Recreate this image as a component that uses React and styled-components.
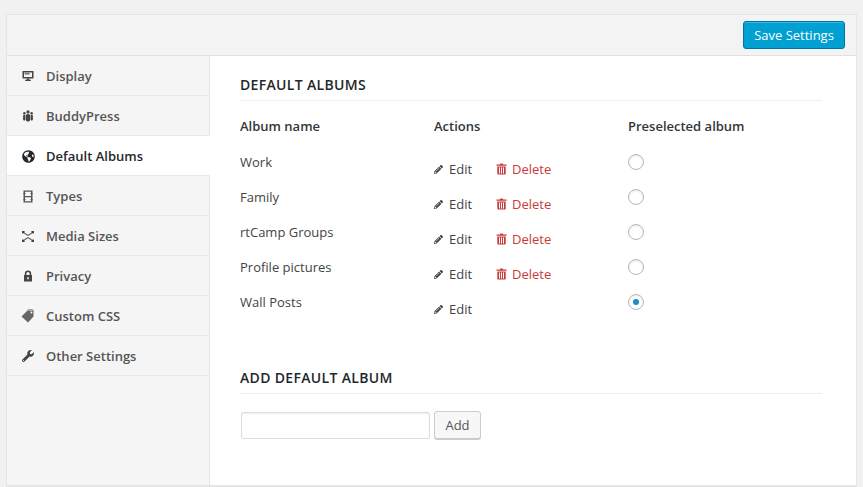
import React from "react";
import styled, { createGlobalStyle } from "styled-components";
import { FaGlobeAmericas, FaWrench, FaPencilAlt } from "react-icons/fa";

const Global = createGlobalStyle`
  html, body { margin: 0; padding: 0; background: #f1f1f1; }
  body { font-family: "Open Sans", sans-serif; font-size: 13px; color: #444; overflow: hidden; }
  * { box-sizing: border-box; }
`;
const Page = styled.div`
  width: 863px; height: 487px; padding: 14px 6px 0 6px;
`;
const Panel = styled.div`
  width: 851px; height: 473px; border: 1px solid #e5e5e5; border-bottom-width: 2px; background: #fff;
  display: flex; flex-direction: column;
`;
const TopBar = styled.div`
  height: 41px; flex: none; background: #f3f3f3; border-bottom: 1px solid #e0e0e0;
  display: flex; justify-content: flex-end; align-items: flex-start; padding: 6px 11px 0 0;
`;
const SaveButton = styled.button`
  width: 102px; height: 28px; padding: 0; border: 1px solid #0073aa; border-radius: 3px; background: #00a0d2;
  color: #fff; font: 400 13px/26px "Open Sans", sans-serif; box-shadow: inset 0 1px 0 rgba(120,200,230,.5);
`;
const Body = styled.div`
  flex: 1; display: flex; min-height: 0;
`;
const Sidebar = styled.nav`
  width: 203px; flex: none; background: #f5f5f5; border-right: 1px solid #e5e5e5;
  display: flex; flex-direction: column;
`;
const NavItem = styled.div`
  height: 40px; flex: none; display: flex; align-items: center;
  border-bottom: 1px solid #e9e9e9; padding: 1px 0 0 0;
  font-weight: 600; font-size: 13px;
  color: ${(p) => (p.$active ? "#23282d" : "#555")};
  background: ${(p) => (p.$active ? "#fff" : "transparent")};
  margin-right: ${(p) => (p.$active ? "-1px" : "0")};
  position: relative;
`;
const NavIcon = styled.span`
  width: 39px; flex: none; display: flex; justify-content: center; padding-left: 3px;
  color: ${(p) => (p.$active ? "#23282d" : "#444")};
`;
const Main = styled.main`
  flex: 1; padding: 15px 34px 0 30px; min-width: 0; background: #fff;
`;
const Heading = styled.h3`
  margin: 0; height: 30px; font: 600 14px/28px "Open Sans", sans-serif; color: #23282d;
  text-transform: uppercase; border-bottom: 1px solid #eee; letter-spacing: 0.33px;
`;
const AlbumGrid = styled.div`
  display: grid; grid-template-columns: 194px 194px 1fr; margin-top: 15px;
`;
const HeadCell = styled.div`
  height: 36px; font-weight: 600; color: #32373c; line-height: 20px;
`;
const NameCell = styled.div`
  height: 35px; line-height: 20px; color: #444;
`;
const ActionCell = styled.div`
  height: 35px; display: flex; padding-top: 3px; line-height: 20px; color: #444;
`;
const ActionLink = styled.span`
  height: 20px; margin-top: 4px;
  display: inline-flex; align-items: center; gap: ${(p) => (p.$danger ? 5 : 6)}px; width: ${(p) => p.$w}px;
  color: ${(p) => (p.$danger ? "#c93a3a" : "#444")};
`;
const RadioCell = styled.div`
  height: 35px; padding-top: 2px;
`;
const Radio = styled.span`
  display: flex; align-items: center; justify-content: center; width: 16px; height: 16px;
  border-radius: 50%; border: 1px solid #b4b9be; background: #fff; box-shadow: inset 0 1px 2px rgba(0,0,0,.1);
  &::after {
    content: ""; width: 6px; height: 6px; border-radius: 50%;
    background: ${(p) => (p.$on ? "#1e8cbe" : "transparent")};
  }
`;
const AddHeading = styled(Heading)`
  margin-top: 37px;
`;
const AddRow = styled.div`
  display: flex; align-items: flex-start; gap: 4px; margin-top: 17px; padding-left: 1px;
`;
const TextInput = styled.input`
  width: 189px; height: 27px; margin-top: 1px; border: 1px solid #ddd; border-radius: 2px; background: #fff;
  box-shadow: inset 0 1px 2px rgba(0,0,0,.07); outline: none;
`;
const AddButton = styled.button`
  width: 47px; height: 28px; padding: 0; border: 1px solid #ccc; border-radius: 3px; background: #f7f7f7;
  box-shadow: 0 1px 0 #ccc; color: #555; font: 400 13px/26px "Open Sans", sans-serif;
`;

const MonitorIcon = () => (
  <svg width="12" height="12" viewBox="0 0 12 12">
    <path fillRule="evenodd" fill="#444" d="M0.5 1h11v7.5h-11zM2 2.5V7h8V2.5z" />
    <path fill="#444" d="M4.8 8.5h2.4v1.2h1.6V11H3.2V9.7h1.6z" />
    <path fill="#777" d="M2.6 3h5v1.6h-5z" />
  </svg>
);
const GroupIcon = () => (
  <svg width="12" height="12" viewBox="0 0 12 12" fill="#444">
    <circle cx="6" cy="1.9" r="1.6" /><circle cx="2.4" cy="3.2" r="1.2" /><circle cx="9.6" cy="3.2" r="1.2" />
    <rect x="3.9" y="4" width="4.2" height="7.4" rx="1.6" />
    <rect x="1.1" y="4.8" width="2.3" height="5.6" rx="1" /><rect x="8.6" y="4.8" width="2.3" height="5.6" rx="1" />
  </svg>
);
const FilmIcon = () => (
  <svg width="10" height="13" viewBox="0 0 10 13">
    <path fillRule="evenodd" fill="#555" d="M0.5 0.5h9v12h-9zM2 1.8V6h6V1.8zM2 7.2v4h6v-4z" />
    <path fill="#555" d="M0.5 3h2v1h-2zM7.5 3h2v1h-2zM0.5 9h2v1h-2zM7.5 9h2v1h-2z" />
  </svg>
);
const SizesIcon = () => (
  <svg width="12" height="11" viewBox="0 0 12 11" fill="#444">
    <rect x="0" y="0" width="2.6" height="2.4" /><rect x="9.4" y="0" width="2.6" height="2.4" />
    <rect x="0" y="8.6" width="2.6" height="2.4" /><rect x="9.4" y="8.6" width="2.6" height="2.4" />
    <path d="M2.5 2.3L6 4.4l3.5-2.1M2.5 8.7L6 6.6l3.5 2.1" fill="none" stroke="#555" strokeWidth="1.1" />
  </svg>
);
const LockIcon = () => (
  <svg width="10" height="12" viewBox="0 0 10 12">
    <path fill="none" stroke="#444" strokeWidth="1.6" d="M2.6 5.5V3.6a2.4 2.4 0 0 1 4.8 0v1.9" />
    <path fillRule="evenodd" fill="#444" d="M1 5h8v6.5H1zM4.2 7.2v2h1.6v-2z" />
  </svg>
);
const TagIcon = () => (
  <svg width="14" height="14" viewBox="0 0 14 14">
    <path d="M0.5 7.5L6.5 1.5h6v6L7 13.5z" fill="#666" />
    <path d="M6 1.5L8 0.5h3.5l1.5 1.5" fill="none" stroke="#888" strokeWidth="0.8" />
    <circle cx="10.4" cy="3.6" r="1" fill="#f5f5f5" />
  </svg>
);
const TrashIcon = () => (
  <svg width="11" height="12" viewBox="0 0 11 12">
    <path fillRule="evenodd" fill="currentColor" d="M3.7 1.6L4.4.4h2.2l.7 1.2h3.2v1.2H.5V1.6zM1.3 3.4h8.4v7.2c0 .6-.4 1-1 1H2.3c-.6 0-1-.4-1-1zM3 4.6v5.8h1V4.6zM5 4.6v5.8h1V4.6zM7 4.6v5.8h1V4.6z" />
  </svg>
);

const nav = [
  ["Display", <MonitorIcon />],
  ["BuddyPress", <GroupIcon />],
  ["Default Albums", <FaGlobeAmericas size={13} />, true],
  ["Types", <FilmIcon />],
  ["Media Sizes", <SizesIcon />],
  ["Privacy", <LockIcon />],
  ["Custom CSS", <TagIcon />],
  ["Other Settings", <FaWrench size={12} />],
];
const albums = [
  ["Work", true], ["Family", true], ["rtCamp Groups", true], ["Profile pictures", true], ["Wall Posts", false, true],
];

export default function App() {
  return (
    <Page>
      <Global />
      <Panel>
        <TopBar><SaveButton>Save Settings</SaveButton></TopBar>
        <Body>
          <Sidebar>
            {nav.map(([label, icon, active]) => (
              <NavItem key={label} $active={active}>
                <NavIcon $active={active}>{icon}</NavIcon>{label}
              </NavItem>
            ))}
          </Sidebar>
          <Main>
            <Heading>Default Albums</Heading>
            <AlbumGrid>
              <HeadCell>Album name</HeadCell><HeadCell>Actions</HeadCell><HeadCell>Preselected album</HeadCell>
              {albums.map(([name, del, on]) => (
                <React.Fragment key={name}>
                  <NameCell>{name}</NameCell>
                  <ActionCell>
                    <ActionLink $w={62}><FaPencilAlt size={9} />Edit</ActionLink>
                    {del && <ActionLink $w={70} $danger><TrashIcon />Delete</ActionLink>}
                  </ActionCell>
                  <RadioCell><Radio $on={on} /></RadioCell>
                </React.Fragment>
              ))}
            </AlbumGrid>
            <AddHeading>Add Default Album</AddHeading>
            <AddRow><TextInput /><AddButton>Add</AddButton></AddRow>
          </Main>
        </Body>
      </Panel>
    </Page>
  );
}
